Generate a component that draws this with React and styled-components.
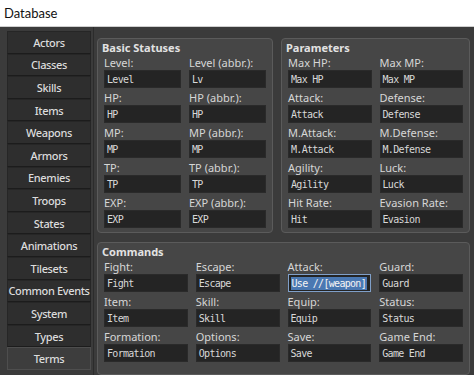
import React from 'react';
import styled, { createGlobalStyle } from 'styled-components';

const Global = createGlobalStyle`
  html, body { margin: 0; padding: 0; background: #3b3b3b; overflow: hidden; }
  body { width: 474px; height: 375px; }
`;

const Window = styled.div`
  width: 474px;
  height: 375px;
  display: flex;
  flex-direction: column;
  background: #3b3b3b;
  overflow: hidden;
`;

const TitleBar = styled.div`
  height: 26px;
  flex: none;
  background: #ffffff;
  border-bottom: 1px solid #cfcfcf;
  display: flex;
  align-items: center;
  padding-left: 4px;
  font-family: Lato, "Noto Sans", sans-serif;
  font-size: 13px;
  color: #111;
`;

const Body = styled.div`
  flex: 1;
  display: flex;
  min-height: 0;
`;

const Sidebar = styled.div`
  width: 84px;
  flex: none;
  padding: 4px 2px 0 7px;
  border-right: 1px solid #2c2c2c;
  display: grid;
  grid-template-rows: repeat(15, 22.6px);
  align-content: start;
`;

const NavButton = styled.div`
  display: flex;
  align-items: center;
  justify-content: center;
  font-family: "Noto Sans", sans-serif;
  font-size: 11px;
  font-weight: 500;
  letter-spacing: -0.35px;
  color: #dcdcdc;
  white-space: nowrap;
  background: ${p => (p.$active ? '#3d3d3d' : '#2e2e2e')};
  border: 1px solid ${p => (p.$active ? '#4e4e4e' : '#262626')};
  border-bottom-color: ${p => (p.$active ? '#4e4e4e' : '#1c1c1c')};
  box-sizing: border-box;
  overflow: visible;
`;

const Content = styled.div`
  flex: 1;
  padding: 11px 4px 0 3px;
  display: flex;
  flex-direction: column;
  gap: 9px;
  min-width: 0;
`;

const TopRow = styled.div`
  display: flex;
  gap: 8px;
  height: 195px;
  flex: none;
`;

const Panel = styled.div`
  box-sizing: border-box;
  width: ${p => p.$w || 'auto'};
  flex: ${p => (p.$w ? 'none' : '1')};
  background: #464646;
  border: 1px solid #5b5b5b;
  border-radius: 4px;
  padding: 1px 6px 3px 6px;
`;

const PanelTitle = styled.div`
  font-family: "Noto Sans", sans-serif;
  font-weight: 700;
  font-size: 11px;
  line-height: 16px;
  color: #e2e2e2;
  margin-left: -2px;
`;

const FieldGrid = styled.div`
  display: grid;
  grid-template-columns: repeat(${p => p.$cols}, 1fr);
  column-gap: 8px;
  row-gap: 3px;
`;

const Field = styled.div`
  display: flex;
  flex-direction: column;
  min-width: 0;
`;

const Label = styled.div`
  font-family: "Noto Sans", sans-serif;
  font-size: 11px;
  line-height: 14px;
  color: #d6d6d6;
  white-space: nowrap;
`;

const Input = styled.div`
  box-sizing: border-box;
  height: 18px;
  background: #242424;
  border: 1px solid ${p => (p.$focus ? '#7f9fc8' : '#2a2a2a')};
  padding-left: 2px;
  display: flex;
  align-items: center;
  font-family: "DejaVu Sans Mono", monospace;
  font-size: 10px;
  letter-spacing: -0.7px;
  color: #d8d8d8;
  white-space: nowrap;
  overflow: hidden;
`;

const Selected = styled.span`
  background: #4a78b2;
  color: #f4f4f4;
  padding: 1px 1px;
`;

const navItems = [
  'Actors', 'Classes', 'Skills', 'Items', 'Weapons', 'Armors', 'Enemies',
  'Troops', 'States', 'Animations', 'Tilesets', 'Common Events', 'System',
  'Types', 'Terms',
];

const basic = [
  ['Level:', 'Level'], ['Level (abbr.):', 'Lv'],
  ['HP:', 'HP'], ['HP (abbr.):', 'HP'],
  ['MP:', 'MP'], ['MP (abbr.):', 'MP'],
  ['TP:', 'TP'], ['TP (abbr.):', 'TP'],
  ['EXP:', 'EXP'], ['EXP (abbr.):', 'EXP'],
];

const params = [
  ['Max HP:', 'Max HP'], ['Max MP:', 'Max MP'],
  ['Attack:', 'Attack'], ['Defense:', 'Defense'],
  ['M.Attack:', 'M.Attack'], ['M.Defense:', 'M.Defense'],
  ['Agility:', 'Agility'], ['Luck:', 'Luck'],
  ['Hit Rate:', 'Hit'], ['Evasion Rate:', 'Evasion'],
];

const commands = [
  ['Fight:', 'Fight'], ['Escape:', 'Escape'], ['Attack:', 'Use //[weapon]', true], ['Guard:', 'Guard'],
  ['Item:', 'Item'], ['Skill:', 'Skill'], ['Equip:', 'Equip'], ['Status:', 'Status'],
  ['Formation:', 'Formation'], ['Options:', 'Options'], ['Save:', 'Save'], ['Game End:', 'Game End'],
];

const Fields = ({ items, cols }) => (
  <FieldGrid $cols={cols}>
    {items.map(([label, value, focus], i) => (
      <Field key={i}>
        <Label>{label}</Label>
        <Input $focus={focus}>{focus ? <Selected>{value}</Selected> : value}</Input>
      </Field>
    ))}
  </FieldGrid>
);

export default function App() {
  return (
    <Window>
      <Global />
      <TitleBar>Database</TitleBar>
      <Body>
        <Sidebar>
          {navItems.map(n => (
            <NavButton key={n} $active={n === 'Terms'}>{n}</NavButton>
          ))}
        </Sidebar>
        <Content>
          <TopRow>
            <Panel $w="176px">
              <PanelTitle>Basic Statuses</PanelTitle>
              <Fields items={basic} cols={2} />
            </Panel>
            <Panel>
              <PanelTitle>Parameters</PanelTitle>
              <Fields items={params} cols={2} />
            </Panel>
          </TopRow>
          <Panel>
            <PanelTitle>Commands</PanelTitle>
            <Fields items={commands} cols={4} />
          </Panel>
        </Content>
      </Body>
    </Window>
  );
}
